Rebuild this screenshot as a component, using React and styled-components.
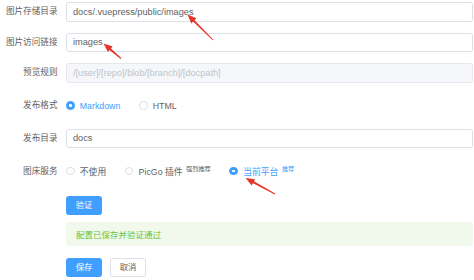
import React from "react";
import styled, { createGlobalStyle } from "styled-components";

const Global = createGlobalStyle`
  html, body { margin: 0; padding: 0; background: #fff; }
  body {
    font-family: "Liberation Sans", "Noto Sans CJK SC", sans-serif;
    -webkit-font-smoothing: antialiased;
  }
  * { box-sizing: border-box; }
`;

const Page = styled.div`
  position: relative;
  width: 474px;
  height: 280px;
  overflow: hidden;
  padding: 2px 1px 0 0;
`;

const FormItem = styled.div`
  display: flex;
  align-items: ${(p) => (p.$top ? "flex-start" : "center")};
  min-height: ${(p) => p.$h || 19.5}px;
  margin-bottom: ${(p) => (p.$mb != null ? p.$mb : 11)}px;
`;

const Label = styled.label`
  flex: none;
  width: 66px;
  padding-right: 8.5px;
  text-align: right;
  font-size: 8.6px;
  color: #5f6266;
  line-height: 1;
`;

const Content = styled.div`
  flex: 1;
  min-width: 0;
  display: flex;
  flex-direction: ${(p) => (p.$column ? "column" : "row")};
  align-items: ${(p) => (p.$column ? "stretch" : "center")};
`;

const Input = styled.input`
  width: 100%;
  height: 19.5px;
  padding: 0 6px;
  border: 1px solid ${(p) => (p.disabled ? "#e4e7ed" : "#dcdfe6")};
  border-radius: 2.5px;
  background: ${(p) => (p.disabled ? "#f5f7fa" : "#fff")};
  color: ${(p) => (p.disabled ? "#c0c4cc" : "#606266")};
  -webkit-text-fill-color: ${(p) => (p.disabled ? "#c0c4cc" : "#606266")};
  opacity: 1;
  font-family: inherit;
  font-size: 9.2px;
  outline: none;
`;

const RadioGroup = styled.div`
  display: flex;
  align-items: center;
  height: 24px;
`;

const Radio = styled.label`
  display: inline-flex;
  align-items: center;
  margin-right: 18.6px;
  font-size: 8.8px;
  color: ${(p) => (p.$checked ? "#409eff" : "#606266")};
  white-space: nowrap;
`;

const Dot = styled.span`
  flex: none;
  width: 8.6px;
  height: 8.6px;
  border-radius: 50%;
  border: 1px solid ${(p) => (p.$checked ? "#409eff" : "#dcdfe6")};
  background: ${(p) => (p.$checked ? "#409eff" : "#fff")};
  display: flex;
  align-items: center;
  justify-content: center;
  margin-right: 5.2px;
  &::after {
    content: "";
    width: 2.6px;
    height: 2.6px;
    border-radius: 50%;
    background: #fff;
    display: ${(p) => (p.$checked ? "block" : "none")};
  }
`;

const Sup = styled.span`
  font-size: 6.2px;
  margin-left: 3.5px;
  position: relative;
  top: -3px;
  color: ${(p) => (p.$blue ? "#409eff" : "#606266")};
`;

const Button = styled.button`
  height: 19px;
  width: 36px;
  padding: 0;
  border-radius: 2.5px;
  border: 1px solid ${(p) => (p.$primary ? "#409eff" : "#dcdfe6")};
  background: ${(p) => (p.$primary ? "#409eff" : "#fff")};
  color: ${(p) => (p.$primary ? "#fff" : "#606266")};
  font-family: inherit;
  font-size: 8.4px;
  line-height: 1;
  display: inline-flex;
  align-items: center;
  justify-content: center;
`;

const ButtonRow = styled.div`
  display: flex;
  gap: 8px;
`;

const Alert = styled.div`
  height: 24px;
  margin-top: 7px;
  padding: 0 10px;
  border-radius: 2.5px;
  background: #f0f9eb;
  color: #67c23a;
  font-size: 8.5px;
  display: flex;
  align-items: center;
`;

const Overlay = styled.svg`
  position: absolute;
  left: 0;
  top: 0;
  pointer-events: none;
`;

function Arrow({ tail, tip }) {
  const dx = tip[0] - tail[0];
  const dy = tip[1] - tail[1];
  const len = Math.hypot(dx, dy);
  const ux = dx / len;
  const uy = dy / len;
  const nx = -uy;
  const ny = ux;
  const hl = 9;
  const hw = 3.6;
  const bx = tip[0] - ux * hl;
  const by = tip[1] - uy * hl;
  const head = [
    [tip[0], tip[1]],
    [bx + nx * hw, by + ny * hw],
    [bx - nx * hw, by - ny * hw],
  ];
  const tw = 0.5;
  const sw = 1.1;
  const shaft = [
    [tail[0] + nx * tw, tail[1] + ny * tw],
    [bx + ux * 2 + nx * sw, by + uy * 2 + ny * sw],
    [bx + ux * 2 - nx * sw, by + uy * 2 - ny * sw],
    [tail[0] - nx * tw, tail[1] - ny * tw],
  ];
  const pts = (a) => a.map((p) => p.join(",")).join(" ");
  return (
    <g fill="#e5362c">
      <polygon points={pts(shaft)} />
      <polygon points={pts(head)} />
    </g>
  );
}

export default function App() {
  return (
    <>
      <Global />
      <Page>
        <form onSubmit={(e) => e.preventDefault()}>
          <FormItem>
            <Label>图片存储目录</Label>
            <Content>
              <Input readOnly value="docs/.vuepress/public/images" />
            </Content>
          </FormItem>
          <FormItem>
            <Label>图片访问链接</Label>
            <Content>
              <Input readOnly value="images" />
            </Content>
          </FormItem>
          <FormItem>
            <Label>预览规则</Label>
            <Content>
              <Input disabled value="/[user]/[repo]/blob/[branch]/[docpath]" />
            </Content>
          </FormItem>
          <FormItem $h={24}>
            <Label>发布格式</Label>
            <Content>
              <RadioGroup>
                <Radio $checked>
                  <Dot $checked />
                  Markdown
                </Radio>
                <Radio>
                  <Dot />
                  HTML
                </Radio>
              </RadioGroup>
            </Content>
          </FormItem>
          <FormItem>
            <Label>发布目录</Label>
            <Content>
              <Input readOnly value="docs" />
            </Content>
          </FormItem>
          <FormItem $h={24}>
            <Label>图床服务</Label>
            <Content>
              <RadioGroup>
                <Radio>
                  <Dot />
                  不使用
                </Radio>
                <Radio>
                  <Dot />
                  PicGo 插件
                  <Sup>强烈推荐</Sup>
                </Radio>
                <Radio $checked>
                  <Dot $checked />
                  当前平台
                  <Sup $blue>推荐</Sup>
                </Radio>
              </RadioGroup>
            </Content>
          </FormItem>
          <FormItem $mb={12} $top>
            <Label />
            <Content $column>
              <div>
                <Button type="button" $primary>验证</Button>
              </div>
              <Alert>配置已保存并验证通过</Alert>
            </Content>
          </FormItem>
          <FormItem $top>
            <Label />
            <Content>
              <ButtonRow>
                <Button type="button" $primary>保存</Button>
                <Button type="button">取消</Button>
              </ButtonRow>
            </Content>
          </FormItem>
        </form>
        <Overlay width="474" height="280" viewBox="0 0 474 280">
          <Arrow tail={[213, 40]} tip={[187.5, 14.5]} />
          <Arrow tail={[121, 58.5]} tip={[103.5, 43.5]} />
          <Arrow tail={[275, 194]} tip={[245.5, 178]} />
        </Overlay>
      </Page>
    </>
  );
}
